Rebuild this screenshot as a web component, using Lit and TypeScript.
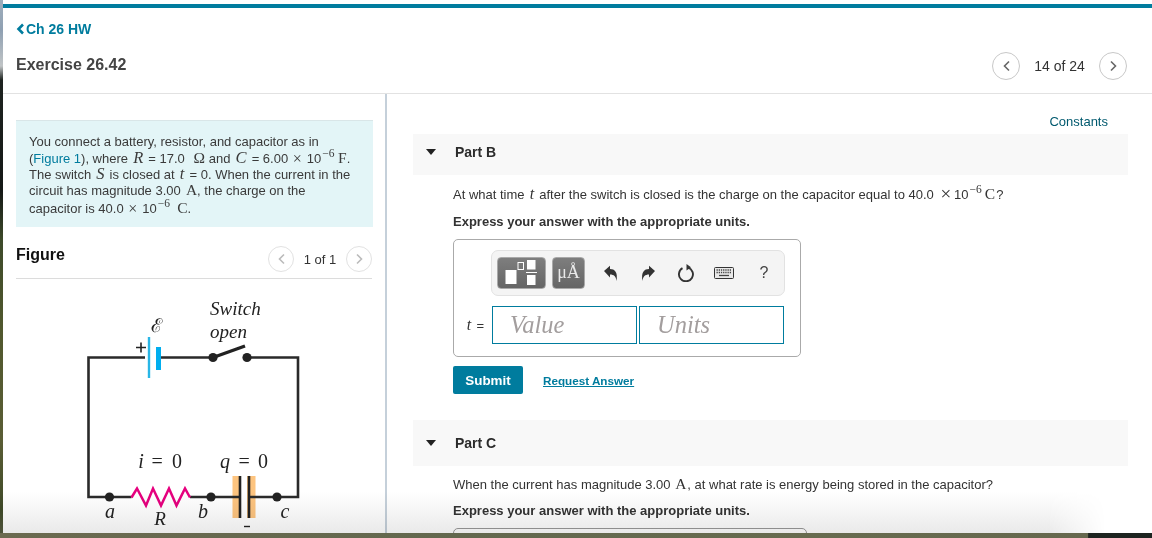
import { LitElement, html, css, svg } from "lit";
import { customElement } from "lit/decorators.js";

const m = (s: string) => html`<span class="mi">${s}</span>`;
const r = (s: string) => html`<span class="mr">${s}</span>`;
const exp = html`<span class="mr times">×</span>10<sup>−6</sup>`;

@customElement("app-root")
export class AppRoot extends LitElement {
  static styles = css`
    :host { display: block; width: 1152px; height: 538px; font-family: "Liberation Sans", Arial, sans-serif; color: #2b2b2b; }
    * { box-sizing: border-box; }
    .page { position: relative; display: flex; width: 1152px; height: 538px; overflow: hidden; background: #fff; }
    .edge { width: 3px; flex: none; background: linear-gradient(#a0aebc 0, #8fa0b2 30px, #c0c4c6 66px, #1e2320 80px, #141816 190px, #3d4a2a 240px, #51582e 330px, #5a5d35 440px, #3f4a28 510px, #5a5d45 538px); }
    .main { flex: 1; min-width: 0; display: flex; flex-direction: column; }
    .bar { height: 4px; margin-top: 4px; background: #007c9e; flex: none; }
    header { flex: none; height: 86px; border-bottom: 1px solid #e2e2e2; padding: 13px 25px 0 13px; }
    .back { display: flex; align-items: center; gap: 1px; height: 16px; font-size: 14px; font-weight: 700; color: #007c9e; }
    .titlerow { display: flex; align-items: center; justify-content: space-between; margin-top: 11px; height: 36px; }
    h1 { margin: 0 0 2px; font-size: 16px; line-height: 20px; font-weight: 700; color: #444; }
    .pager { display: flex; align-items: center; font-size: 14px; color: #333; }
    .pager span { width: 79px; text-align: center; }
    .circ { width: 28px; height: 28px; border-radius: 50%; border: 1px solid #c8c8c8; display: flex; align-items: center; justify-content: center; background: #fff; padding: 0; }
    .body { flex: 1; min-height: 0; display: flex; }
    .left { width: 384px; flex: none; border-right: 2px solid #c5d0da; padding: 26px 13px 0 13px; }
    .info { height: 107px; margin-right: -1px; background: #e3f5f7; border-top: 1px solid #d9e6e8; padding: 13px 0 0 13px; font-size: 13px; color: #3a3a3a; white-space: nowrap; }
    .info div { height: 16px; line-height: 16px; }
    .info .l2 { margin-top: 1px; }
    .info .l5 { margin-top: 2px; }
    .info a { color: #007c9e; }
    .info .mi { font-size: 16.5px; margin: 0 1.5px; }
    .info .mr { font-size: 15.5px; margin: 0 0 0 1.5px; }
    .info .times { margin: 0 5px 0 1px; font-size: 16px; }
    .mi { font-family: "Liberation Serif", serif; font-style: italic; font-size: 16px; margin: 0 1.5px; line-height: 0; }
    .mr { font-family: "Liberation Serif", serif; font-size: 15.5px; margin: 0 1px; line-height: 0; }
    .times { font-size: 19px; margin: 0 3px; vertical-align: -1px; }
    sup { font-family: "Liberation Serif", serif; font-size: 11.5px; line-height: 0; vertical-align: 0.55em; margin: 0 2px 0 1px; }
    .fighead { display: flex; align-items: center; justify-content: space-between; height: 52px; border-bottom: 1px solid #dcdcdc; padding-top: 5px; }
    .fighead h2 { margin: 0 0 1px; font-size: 16px; font-weight: 700; color: #111; }
    .figpager { display: flex; align-items: center; font-size: 13px; color: #333; margin-top: 8px; }
    .figpager span { width: 52px; text-align: center; }
    .figpager .circ { width: 26px; height: 26px; border-color: #e2e2e2; }
    .fig { display: block; }
    .right { flex: 1; min-width: 0; padding: 0 24px 0 26px; }
    .constants { height: 40px; padding: 20px 20px 0 0; text-align: right; font-size: 13px; line-height: 15px; color: #00596e; }
    .parthead { display: flex; align-items: center; background: #f8f8f8; font-size: 14px; font-weight: 700; color: #2b2b2b; padding-left: 13px; gap: 19px; }
    .partb { height: 41px; padding-bottom: 5px; }
    .partc { height: 46px; margin-top: 26px; }
    .tri { width: 0; height: 0; border-left: 5.5px solid transparent; border-right: 5.5px solid transparent; border-top: 6px solid #222; }
    .content { padding-left: 40px; font-size: 13px; color: #333; }
    .q { height: 18px; line-height: 18px; white-space: nowrap; }
    .qb { box-sizing: content-box; padding-top: 11px; }
    .qc { box-sizing: content-box; padding-top: 10px; }
    .ex { font-weight: 700; line-height: 16px; margin-top: 10px; color: #333; }
    .qc + .ex { margin-top: 9px; }
    .box { width: 348px; height: 118px; margin-top: 9px; border: 1px solid #aaa; border-radius: 5px; padding: 10px 15px 0 0; }
    .tools { margin-left: 37px; height: 46px; border: 1px solid #e2e2e2; border-radius: 7px; background: #f4f4f4; display: flex; align-items: center; padding-left: 5px; }
    .tb { height: 32px; border-radius: 4px; border: 1px solid #a9a9a9; background: linear-gradient(#7e7e7e, #656565); display: flex; align-items: center; justify-content: center; }
    .tb.t { width: 49px; margin-right: 6px; }
    .tb.u { width: 33px; color: #e9e9e9; font-family: "Liberation Serif", serif; font-size: 18px; padding-bottom: 1px; }
    .ic { display: flex; width: 38px; justify-content: center; }
    .ic.undo { margin-left: 6px; }
    .ic.help { margin-left: 2px; font-size: 16px; color: #444; }
    .ans { display: flex; align-items: center; margin-top: 10px; }
    .lab { flex: none; width: 38px; padding-right: 8px; text-align: right; font-size: 13px; white-space: nowrap; }
    input { flex: none; width: 145px; height: 38px; border: 1px solid #007c9e; padding: 0 0 0 17px; margin: 0 2px 0 0; font-family: "Liberation Serif", serif; font-style: italic; font-size: 24.5px; background: #fff; border-radius: 0; outline: none; }
    input::placeholder { color: #a39e9e; opacity: 1; }
    .acts { display: flex; align-items: center; margin-top: 9px; }
    .submit { width: 70px; height: 28px; background: #007c9e; color: #fff; border: 0; border-radius: 2px; font: 700 13.4px "Liberation Sans", Arial, sans-serif; padding: 0; }
    .req { margin-left: 20px; font-size: 11.7px; font-weight: 700; color: #007c9e; text-decoration: underline; }
    .box2 { width: 354px; height: 40px; margin-top: 9px; border: 1px solid #999; border-radius: 5px; }
    .shade { position: absolute; left: 0; right: 0; bottom: 4px; height: 42px; pointer-events: none; mix-blend-mode: multiply; background: linear-gradient(#fff, #e9e9e9); -webkit-mask-image: linear-gradient(90deg, #000 91%, transparent 96%); mask-image: linear-gradient(90deg, #000 91%, transparent 96%); }
    .dock { position: absolute; left: 0; right: 0; bottom: 0; height: 5px; background: linear-gradient(90deg, #6b6a50 0, #63684e 40%, #676b4f 70%, #66684e 94.4%, #1d2420 94.5%, #1d2420 100%); }
  `;

  private chev(left: boolean, color = "#666", size = 12, width = 1.6) {
    return html`<svg width=${size * 0.75} height=${size} viewBox="0 0 9 12"><path d=${left ? "M7 1.500 2.500 6 7 10.500" : "M2 1.500 6.500 6 2 10.500"} fill="none" stroke=${color} stroke-width=${width}/></svg>`;
  }

  private circuit() {
    const t = (x: number, y: number, s: string, size = 18, italic = true, anchor = "middle") =>
      svg`<text x=${x} y=${y} font-size=${size} font-family="Liberation Serif, serif" font-style=${italic ? "italic" : "normal"} text-anchor=${anchor} fill="#222">${s}</text>`;
    return html`<svg class="fig" width="357" height="255" viewBox="16 279 357 255">
      <rect x="232.500" y="476" width="8.500" height="42" fill="#fdc47f"/>
      <rect x="247" y="476" width="8.500" height="42" fill="#fdc47f"/>
      <path d="M145 357.500H88.500V497H131.500M190 497H239.500M249.500 497H298V357.500H247M213 357.500H158" fill="none" stroke="#2a2a2a" stroke-width="2.600"/>
      <path d="M240 476V518M249 476V518" stroke="#222" stroke-width="2.600"/>
      <path d="M131.500 497.500 137 488.500 146 505.500 153 488.500 161 505.500 169 488.500 176.500 505.500 185 488.500 190 497.500" fill="none" stroke="#e6007e" stroke-width="2.500"/>
      <path d="M149 337V378" stroke="#29b6e6" stroke-width="2.400"/>
      <rect x="156" y="347" width="5" height="23" fill="#00aeef"/>
      <path d="M213 357.500 245 346" stroke="#222" stroke-width="3.400"/>
      <g fill="#222">
        <circle cx="213" cy="357.500" r="4.600"/><circle cx="247" cy="357.500" r="4.600"/>
        <circle cx="109.500" cy="497" r="4.600"/><circle cx="211" cy="497" r="4.600"/><circle cx="277" cy="497" r="4.600"/>
      </g>
      <path d="M136 347.500H146M141 342.500V352.500" stroke="#222" stroke-width="1.600"/>
      <path d="M244 526.500H250" stroke="#222" stroke-width="1.400"/>
      ${t(210, 315, "Switch", 19, true, "start")}
      ${t(210, 338, "open", 19, true, "start")}
      ${t(156.500, 332, "ℰ", 19, false)}
      ${t(141, 468, "i", 20)}${t(151.500, 468, "=", 20, false, "start")}${t(172, 468, "0", 20, false, "start")}
      ${t(225, 468, "q", 20)}${t(238.500, 468, "=", 20, false, "start")}${t(258, 468, "0", 20, false, "start")}
      ${t(110, 518, "a", 20)}${t(160, 525, "R", 19)}${t(203, 518, "b", 20)}${t(285, 518, "c", 20)}
    </svg>`;
  }

  private tools() {
    return html`<div class="tools">
      <div class="tb t"><svg width="33" height="26" viewBox="0 0 33 26">
        <rect x="0.500" y="10" width="11" height="14" fill="#fff"/>
        <rect x="13" y="2.500" width="5.500" height="7" fill="none" stroke="#fff"/>
        <rect x="22" y="0" width="8.500" height="9.500" fill="#fff"/>
        <rect x="21" y="12" width="11" height="1" fill="#fff"/>
        <rect x="22" y="15" width="8.500" height="10" fill="#fff"/>
      </svg></div>
      <div class="tb u">μÅ</div>
      <div class="ic undo"><svg width="15" height="17" viewBox="0 0 15 17"><path d="M1 6 7 .8V4c4.800 0 8 3 6.500 12C13 11.500 11 9.500 7 9.500v3z" fill="#333"/></svg></div>
      <div class="ic"><svg width="15" height="17" viewBox="0 0 15 17"><path d="M14 6 8 .8V4C3.200 4 0 7 1.500 16 2 11.500 4 9.500 8 9.500v3z" fill="#333"/></svg></div>
      <div class="ic"><svg width="18" height="18" viewBox="0 0 18 18"><path d="M5.500 4.200A7 7 0 1 0 11 3.600" fill="none" stroke="#333" stroke-width="1.900"/><path d="M9.500 0 14 3.300 9.500 6.500z" fill="#333"/></svg></div>
      <div class="ic"><svg width="20" height="12" viewBox="0 0 20 12"><rect x=".5" y=".5" width="19" height="11" rx="1" fill="#e8e8e8" stroke="#333"/><path d="M2.500 3H17.500M2.500 5.500H17.500" stroke="#444" stroke-width="1.300" stroke-dasharray="1.300 .9"/><path d="M5 8.500H15" stroke="#444" stroke-width="1.300"/></svg></div>
      <div class="ic help">?</div>
    </div>`;
  }

  render() {
    return html`<div class="page">
      <div class="edge"></div>
      <div class="main">
        <div class="bar"></div>
        <header>
          <div class="back">${this.chev(true, "#007c9e", 12, 2.600)}Ch 26 HW</div>
          <div class="titlerow">
            <h1>Exercise 26.42</h1>
            <div class="pager">
              <button class="circ">${this.chev(true)}</button>
              <span>14 of 24</span>
              <button class="circ">${this.chev(false)}</button>
            </div>
          </div>
        </header>
        <div class="body">
          <div class="left">
            <div class="info">
              <div>You connect a battery, resistor, and capacitor as in</div>
              <div class="l2">(<a>Figure 1</a>), where ${m("R")} = 17.0&nbsp; ${r("Ω")} and ${m("C")} = 6.00 ${exp}${r("F")}.</div>
              <div>The switch ${m("S")} is closed at ${m("t")} = 0. When the current in the</div>
              <div>circuit has magnitude 3.00 ${r("A")}, the charge on the</div>
              <div class="l5">capacitor is 40.0 ${exp} ${r("C")}.</div>
            </div>
            <div class="fighead">
              <h2>Figure</h2>
              <div class="figpager">
                <div class="circ">${this.chev(true, "#bbb")}</div>
                <span>1 of 1</span>
                <div class="circ">${this.chev(false, "#bbb")}</div>
              </div>
            </div>
            ${this.circuit()}
          </div>
          <div class="right">
            <div class="constants">Constants</div>
            <div class="parthead partb"><div class="tri"></div>Part B</div>
            <div class="content">
              <div class="q qb">At what time ${m("t")} after the switch is closed is the charge on the capacitor equal to 40.0 ${exp}${r("C")}?</div>
              <div class="ex">Express your answer with the appropriate units.</div>
              <div class="box">
                ${this.tools()}
                <div class="ans">
                  <div class="lab">${m("t")} =</div>
                  <input placeholder="Value" />
                  <input placeholder="Units" />
                </div>
              </div>
              <div class="acts"><button class="submit">Submit</button><a class="req">Request Answer</a></div>
            </div>
            <div class="parthead partc"><div class="tri"></div>Part C</div>
            <div class="content">
              <div class="q qc">When the current has magnitude 3.00 ${r("A")}, at what rate is energy being stored in the capacitor?</div>
              <div class="ex">Express your answer with the appropriate units.</div>
              <div class="box2"></div>
            </div>
          </div>
        </div>
      </div>
      <div class="shade"></div>
      <div class="dock"></div>
    </div>`;
  }
}
